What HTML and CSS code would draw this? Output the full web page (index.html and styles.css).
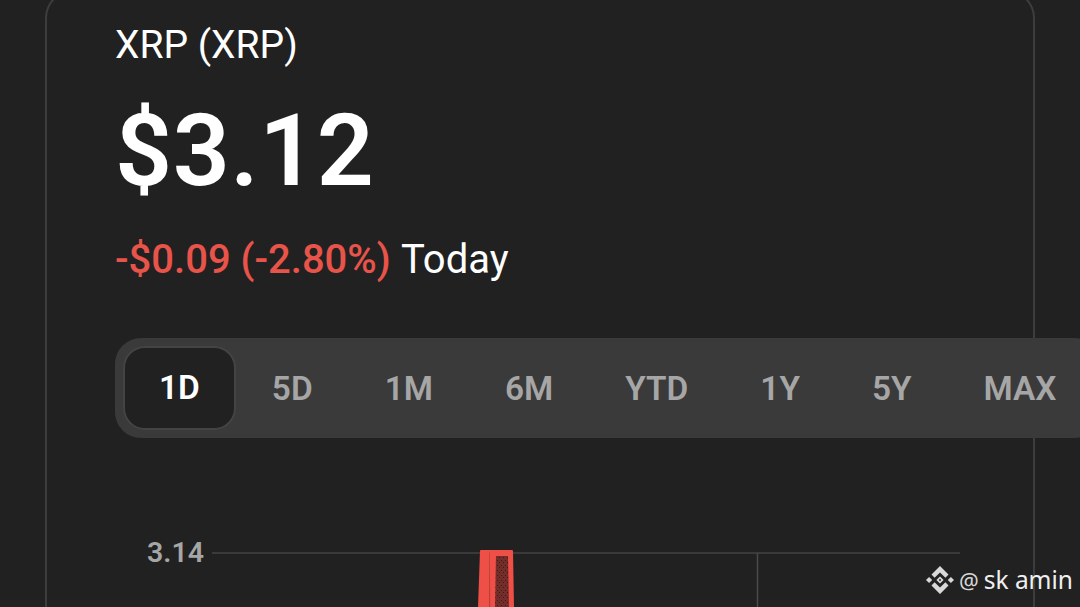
FILE: index.html
```html
<!DOCTYPE html>
<html lang="en">
<head>
  <meta charset="UTF-8">
  <title>XRP (XRP)</title>
  <link rel="stylesheet" href="styles.css">
</head>
<body>

<main class="card">
  <div class="coin-name">XRP (XRP)</div>
  <div class="price">$3.12</div>
  <div class="change"><span class="change-down">-$0.09 (-2.80%)</span> Today</div>

  <div class="ranges">
    <div class="range range-active">1D</div>
    <div class="range">5D</div>
    <div class="range">1M</div>
    <div class="range">6M</div>
    <div class="range">YTD</div>
    <div class="range">1Y</div>
    <div class="range">5Y</div>
    <div class="range">MAX</div>
  </div>

  <div class="chart">
    <div class="axis-label">3.14</div>
    <svg class="plot" width="748" height="58" viewBox="0 0 748 58">
      <defs>
        <pattern id="stipple" width="4" height="5" patternUnits="userSpaceOnUse">
          <rect width="4" height="5" fill="#752d2a"/>
          <rect x="1" y="1" width="1" height="1" fill="#3a1a1a"/>
          <rect x="3" y="3" width="1" height="1" fill="#3a1a1a"/>
        </pattern>
      </defs>
      <line x1="0" y1="4" x2="748" y2="4" stroke="#3a3a3a" stroke-width="2"/>
      <line x1="545.5" y1="4" x2="545.5" y2="58" stroke="#4a4a4a" stroke-width="1.5"/>
      <path d="M266 58 L268 2 Q268 1 269 1 L300 1 Q301 1 301 2 L302 58 Z" fill="#ee4f46"/>
      <path d="M277 58 L277.300 3 L277.900 3 L278.200 58 Z" fill="#b8403a"/>
      <path d="M283 58 L284 7 L296 7 L297 58 Z" fill="url(#stipple)"/>
    </svg>
  </div>
</main>

<div class="watermark">
  <svg class="watermark-logo" width="28" height="28" viewBox="0 0 28 28">
    <path d="M8.600 11.800 L14 6.400 L19.400 11.800 L22.500 8.600 L14 0 L5.500 8.600 Z" fill="#d8d8d8"/>
    <path d="M8.600 16.200 L14 21.600 L19.400 16.200 L22.500 19.400 L14 28 L5.500 19.400 Z" fill="#d8d8d8"/>
    <path d="M0 14 L3.100 10.900 L6.200 14 L3.100 17.100 Z" fill="#d8d8d8"/>
    <path d="M21.800 14 L24.900 10.900 L28 14 L24.900 17.100 Z" fill="#d8d8d8"/>
    <path d="M14 10.400 L17.600 14 L14 17.600 L10.400 14 Z M14 12.800 L12.800 14 L14 15.200 L15.200 14 Z" fill="#d8d8d8" fill-rule="evenodd"/>
  </svg>
  <span class="watermark-at">@</span>
  <span>sk amin</span>
</div>

</body>
</html>
```

FILE: styles.css
```css
html, body {
  margin: 0;
  padding: 0;
  height: 607px;
  overflow: hidden;
}
body {
  position: relative;
  background: #212121;
  font-family: 'Roboto', sans-serif;
  color: #fff;
}
.card {
  box-sizing: border-box;
  width: 990px;
  height: 617px;
  margin: -10px 0 0 45px;
  padding: 30px 0 0 68px;
  border: 2px solid #3d3d3d;
  border-bottom: 0;
  border-radius: 28px 28px 0 0;
}
.coin-name {
  font-size: 39px;
  line-height: 46px;
}
.price {
  margin-top: 24px;
  font-size: 100px;
  font-weight: 600;
  letter-spacing: 0.500px;
  line-height: 118px;
}
.change {
  margin-top: 26px;
  font-size: 40px;
  line-height: 48px;
  word-spacing: 1px;
}
.change-down {
  color: #e8534a;
  font-weight: 500;
  word-spacing: 0;
}
.ranges {
  display: flex;
  align-items: center;
  box-sizing: border-box;
  width: max-content;
  height: 100px;
  margin-top: 54px;
  padding: 0 8px;
  background: #3a3a3a;
  border-radius: 26px;
}
.range {
  padding: 0 36px;
  font-size: 33.400px;
  font-weight: 600;
  line-height: 83px;
  color: #a6a6a6;
}
.range-active {
  box-sizing: border-box;
  height: 84px;
  background: #212121;
  border: 2px solid #444;
  border-radius: 22px;
  color: #fff;
  padding: 0 34px;
  line-height: 80px;
}
.chart {
  display: flex;
  align-items: flex-start;
  margin-top: 99px;
  margin-left: 32px;
  gap: 8px;
}
.axis-label {
  font-size: 28.500px;
  font-weight: 600;
  line-height: 32px;
  color: #a6a6a6;
}
.plot {
  display: block;
  margin-top: 12px;
}
.watermark {
  position: absolute;
  right: 7px;
  bottom: 12px;
  display: flex;
  align-items: center;
  gap: 5px;
  font-family: 'Noto Sans', sans-serif;
  font-size: 24.500px;
  line-height: 30px;
  color: #f0f0f0;
}
.watermark-at {
  font-size: 22px;
  color: #d8d8d8;
}
```
